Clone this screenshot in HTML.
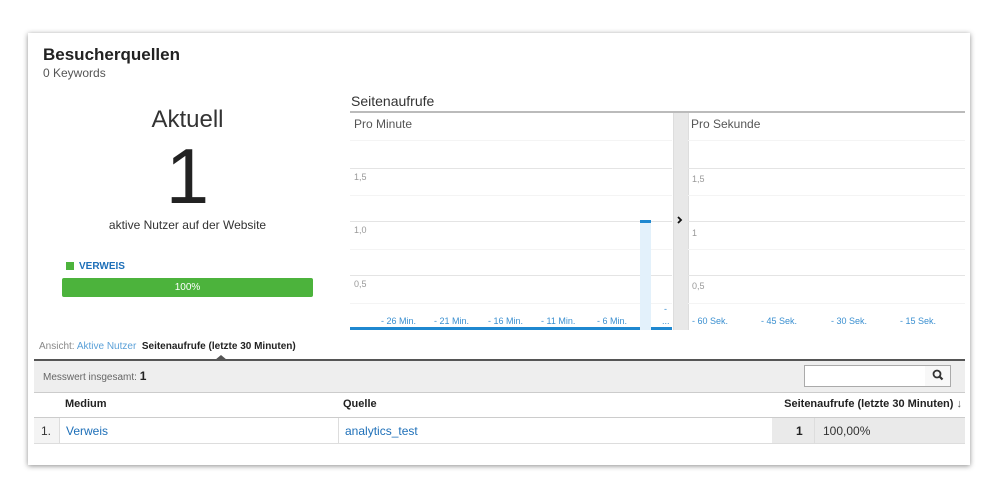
<!DOCTYPE html>
<html><head><meta charset="utf-8"><style>
body{margin:0;width:1000px;height:497px;background:#fff;font-family:"Liberation Sans",Arial,sans-serif;position:relative;overflow:hidden;color:#222}
.a{position:absolute}
.card{left:28px;top:33px;width:942px;height:432px;background:#fff;box-shadow:0 1px 5px rgba(0,0,0,.45)}
.gl{position:absolute;height:1px;background:#e4e4e4}
.gl2{position:absolute;height:1px;background:#f4f4f4}
.ax{position:absolute;font-size:9px;color:#999}
.xl{position:absolute;font-size:9px;color:#3a8fd0;top:316px}
</style></head><body>
<div class="a card"></div>
<div class="a" style="left:43px;top:45px;font-size:17px;font-weight:bold;color:#222">Besucherquellen</div>
<div class="a" style="left:43px;top:66px;font-size:12px;color:#555">0 Keywords</div>

<div class="a" style="left:62px;top:106px;width:251px;text-align:center;font-size:24px;color:#333">Aktuell</div>
<div class="a" style="left:62px;top:137px;width:251px;text-align:center;font-size:78px;line-height:78px;color:#222">1</div>
<div class="a" style="left:62px;top:218px;width:251px;text-align:center;font-size:12px;color:#333">aktive Nutzer auf der Website</div>
<div class="a" style="left:66px;top:262px;width:8px;height:8px;background:#4cb33c"></div>
<div class="a" style="left:79px;top:261px;font-size:10px;font-weight:bold;color:#1d6fb8">VERWEIS</div>
<div class="a" style="left:62px;top:278px;width:251px;height:19px;background:#4cb33c;border-radius:2px;color:#fff;font-size:10px;text-align:center;line-height:19px">100%</div>

<div class="a" style="left:351px;top:93px;font-size:14px;color:#333">Seitenaufrufe</div>
<div class="a" style="left:350px;top:111px;width:615px;height:2px;background:#bbb"></div>
<div class="a" style="left:354px;top:117px;font-size:12px;color:#555">Pro Minute</div>
<div class="a" style="left:691px;top:117px;font-size:12px;color:#555">Pro Sekunde</div>
<div class="a" style="left:673px;top:113px;width:14px;height:217px;background:#e8e8e8;border-left:1px solid #ddd;border-right:1px solid #ddd"></div>
<svg class="a" style="left:677px;top:216px" width="6" height="8"><path d="M1 1 L4 4 L1 7" fill="none" stroke="#111" stroke-width="1.8"/></svg>
<div class="gl2" style="left:350px;top:140px;width:322px"></div><div class="gl2" style="left:688px;top:140px;width:277px"></div>
<div class="gl" style="left:350px;top:168px;width:322px"></div><div class="gl" style="left:688px;top:168px;width:277px"></div>
<div class="gl2" style="left:350px;top:195px;width:322px"></div><div class="gl2" style="left:688px;top:195px;width:277px"></div>
<div class="gl" style="left:350px;top:221px;width:322px"></div><div class="gl" style="left:688px;top:221px;width:277px"></div>
<div class="gl2" style="left:350px;top:249px;width:322px"></div><div class="gl2" style="left:688px;top:249px;width:277px"></div>
<div class="gl" style="left:350px;top:275px;width:322px"></div><div class="gl" style="left:688px;top:275px;width:277px"></div>
<div class="gl2" style="left:350px;top:303px;width:322px"></div><div class="gl2" style="left:688px;top:303px;width:277px"></div>
<div class="ax" style="left:354px;top:172px">1,5</div><div class="ax" style="left:692px;top:174px">1,5</div>
<div class="ax" style="left:354px;top:225px">1,0</div><div class="ax" style="left:692px;top:228px">1</div>
<div class="ax" style="left:354px;top:279px">0,5</div><div class="ax" style="left:692px;top:281px">0,5</div>
<div class="a" style="left:640px;top:220px;width:11px;height:110px;background:#e3f1fb"></div>
<div class="a" style="left:640px;top:220px;width:11px;height:3px;background:#1f88d0"></div>
<div class="a" style="left:350px;top:327px;width:290px;height:3px;background:#1f88d0"></div>
<div class="a" style="left:651px;top:327px;width:21px;height:3px;background:#1f88d0"></div>
<div class="xl" style="left:381px">- 26 Min.</div><div class="xl" style="left:434px">- 21 Min.</div><div class="xl" style="left:488px">- 16 Min.</div><div class="xl" style="left:541px">- 11 Min.</div><div class="xl" style="left:597px">- 6 Min.</div>
<div class="xl" style="left:664px;top:304px">-</div><div class="xl" style="left:662px;top:316px">...</div>
<div class="xl" style="left:692px">- 60 Sek.</div><div class="xl" style="left:761px">- 45 Sek.</div><div class="xl" style="left:831px">- 30 Sek.</div><div class="xl" style="left:900px">- 15 Sek.</div>

<div class="a" style="left:39px;top:341px;font-size:10px;color:#888">Ansicht: <span style="color:#5aa0d8">Aktive Nutzer</span> &nbsp;<b style="color:#222">Seitenaufrufe (letzte 30 Minuten)</b></div>
<div class="a" style="left:215px;top:355px;width:0;height:0;border-left:6px solid transparent;border-right:6px solid transparent;border-bottom:5px solid #555"></div>
<div class="a" style="left:34px;top:359px;width:931px;height:2px;background:#555"></div>
<div class="a" style="left:34px;top:361px;width:931px;height:31px;background:#eee;border-bottom:1px solid #ccc"></div>
<div class="a" style="left:43px;top:369px;font-size:10px;color:#666">Messwert insgesamt: <b style="color:#222;font-size:12px">1</b></div>
<div class="a" style="left:804px;top:365px;width:120px;height:20px;background:#fff;border:1px solid #aaa"></div>
<div class="a" style="left:925px;top:365px;width:25px;height:20px;background:#f8f8f8;border:1px solid #aaa;border-left:none"></div>
<svg class="a" style="left:932px;top:369px" width="12" height="12"><circle cx="5" cy="5" r="3.5" fill="none" stroke="#333" stroke-width="1.8"/><path d="M7.5 7.5 L10.5 10.5" stroke="#333" stroke-width="2.2"/></svg>
<div class="a" style="left:34px;top:393px;width:931px;height:24px;background:#fff;border-bottom:1px solid #ccc"></div>
<div class="a" style="left:65px;top:398px;font-size:11px;font-weight:bold">Medium</div>
<div class="a" style="left:343px;top:398px;font-size:11px;font-weight:bold">Quelle</div>
<div class="a" style="left:760px;top:398px;width:202px;text-align:right;font-size:11px;font-weight:bold">Seitenaufrufe (letzte 30 Minuten) <span style="font-weight:normal;color:#555">↓</span></div>
<div class="a" style="left:34px;top:418px;width:931px;height:25px;background:#fff;border-bottom:1px solid #ddd"></div>
<div class="a" style="left:34px;top:418px;width:25px;height:25px;background:#f4f4f4;border-right:1px solid #ddd"></div>
<div class="a" style="left:338px;top:418px;width:1px;height:25px;background:#ddd"></div>
<div class="a" style="left:772px;top:418px;width:193px;height:25px;background:#eaeaea"></div>
<div class="a" style="left:814px;top:418px;width:1px;height:25px;background:#ddd"></div>
<div class="a" style="left:41px;top:424px;font-size:12px;color:#333">1.</div>
<div class="a" style="left:66px;top:424px;font-size:12px;color:#1d6fb8">Verweis</div>
<div class="a" style="left:345px;top:424px;font-size:12px;color:#1d6fb8">analytics_test</div>
<div class="a" style="left:796px;top:424px;font-size:12px;font-weight:bold">1</div>
<div class="a" style="left:823px;top:424px;font-size:12px;color:#333">100,00%</div>
</body></html>
